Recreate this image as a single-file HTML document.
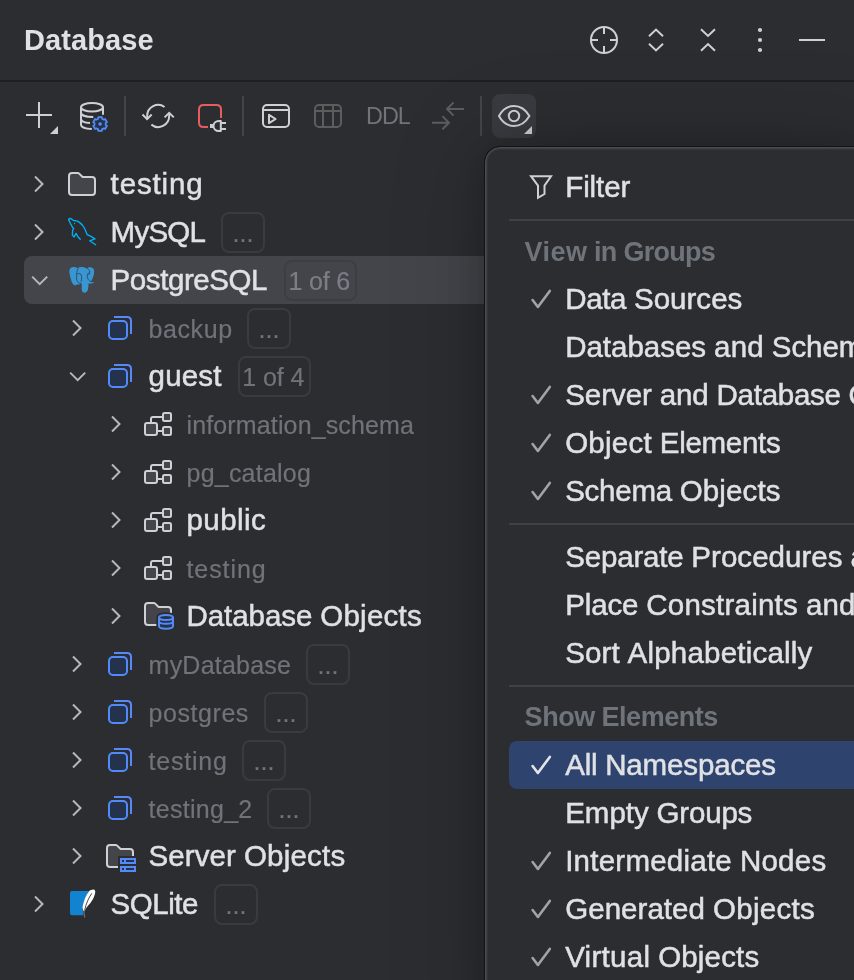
<!DOCTYPE html>
<html lang="en">
<head>
<meta charset="utf-8">
<title>Database</title>
<style>
html,body{margin:0;padding:0;}
body{width:854px;height:980px;overflow:hidden;background:#2b2d30;position:relative;
  font-family:"Liberation Sans",sans-serif;color:#dfe1e5;font-size:29px;}
.abs{position:absolute;}
#title{left:24px;top:0;height:80px;line-height:80px;font-weight:bold;font-size:29px;color:#dfe1e5;white-space:nowrap;}
#hline{left:0;top:80px;width:854px;height:2px;background:#1e1f22;}
.row{position:absolute;left:0;height:48px;width:486px;white-space:nowrap;}
.row .t{position:absolute;top:0;height:48px;line-height:48px;font-size:29.5px;}
.row .t.dim{font-size:25px;color:#6f737a;top:1px;}
.row .hint{position:absolute;top:4px;height:41px;box-sizing:border-box;border:2px solid #393b40;border-radius:8px;
  color:#6f737a;line-height:38px;font-size:25px;text-align:center;white-space:nowrap;}
.row .hint.onsel{border-color:#3c3e43;color:#7a7e85;}
#sel{left:24px;top:256px;width:470px;height:48px;border-radius:8px;background:#43454a;}
#popup{left:485px;top:147px;width:400px;height:900px;border-radius:15px;background:#2b2d30;border:1px solid #4a4c51;box-sizing:border-box;box-shadow:0 0 0 1px #121315,inset 0 0 0 1px #3d3f44,inset 0 0 0 2px #323437;}
#popshadow{left:485px;top:147px;width:400px;height:900px;border-radius:15px;box-shadow:0 4px 36px rgba(0,0,0,.22),0 0 100px rgba(0,0,0,.2);}
.mi{position:absolute;left:564px;height:48px;line-height:48px;font-size:29.5px;white-space:nowrap;color:#dfe1e5;}
.mh{position:absolute;left:524px;height:48px;line-height:48px;font-size:27px;font-weight:bold;white-space:nowrap;color:#6f737a;}
.sep{position:absolute;left:509px;width:345px;height:2px;background:#3f4146;}
#msel{left:509px;top:741px;width:345px;height:48px;border-radius:8px 0 0 8px;background:#2e436e;}
#root{position:absolute;left:0;top:0;width:854px;height:980px;overflow:hidden;will-change:transform;}
.row .t,.mi{-webkit-text-stroke:0.5px currentColor;}
.row .t.dim,.row .hint{-webkit-text-stroke:0.2px currentColor;}

</style>
</head>
<body>
<div id="root">
<div id="title" class="abs" style="letter-spacing:0.088px">Database</div>
<div id="hline" class="abs"></div>
<svg id="tb" class="abs" style="left:0;top:0" width="854" height="148" viewBox="0 0 854 148">
<g fill="none" stroke="#ced0d6" stroke-width="2">
<!-- header icons -->
<circle cx="604" cy="40" r="13"/><path d="M604 27 V34 M604 46 V53 M591 40 H598 M610 40 H617"/>
<path d="M649 36.3 L656 29.6 L663 36.3 M649 43.7 L656 50.4 L663 43.7"/>
<path d="M701 29.2 L708 35.9 L715 29.2 M701 50.8 L708 44.1 L715 50.8"/>
<path d="M799 40 H825"/>
<!-- plus -->
<path d="M26 115 H52 M39 102 V128"/>
<!-- db with gear -->
<ellipse cx="92" cy="107.25" rx="11" ry="4.25"/>
<path d="M81 107.25 V124.8 M103 107.25 V114.8 M81 112.8 C81 115 85.5 117 93.3 117 M81 118.8 C81 121 84.5 122.8 90 123 M81 124.8 C81 127 85 128.8 91.8 129"/>
<!-- refresh -->
<path d="M147.2 119 V116 A11 11 0 0 1 164.56 107.02 M169.2 113 V116 A11 11 0 0 1 151.37 124.62"/>
<path d="M142.5 114.5 L147.1 119.1 L151.7 114.5 M164.6 117.4 L169.2 112.8 L173.8 117.4"/>
<!-- console -->
<rect x="263" y="105" width="26" height="22" rx="4"/><path d="M263 110 H289"/>
<path d="M269 114.8 V123.2 L275.6 119 Z" stroke-linejoin="round"/>
</g>
<g fill="#ced0d6">
<circle cx="760" cy="30" r="2.1"/><circle cx="760" cy="40" r="2.1"/><circle cx="760" cy="50" r="2.1"/>
<path d="M58 126 V134 H50 Z"/>
<path d="M532 126 V134 H524 Z"/>
</g>
<!-- gear -->
<g>
<path d="M101.96 118.61 L101.94 117.14 L98.26 117.14 L98.24 118.61 L96.36 119.70 L95.08 118.98 L93.24 122.16 L94.50 122.91 L94.50 125.09 L93.24 125.84 L95.08 129.02 L96.36 128.30 L98.24 129.39 L98.26 130.86 L101.94 130.86 L101.96 129.39 L103.84 128.30 L105.12 129.02 L106.96 125.84 L105.70 125.09 L105.70 122.91 L106.96 122.16 L105.12 118.98 L103.84 119.70 Z" fill="#25324d" stroke="#548af7" stroke-width="1.8" stroke-linejoin="round"/>
<circle cx="100.1" cy="124" r="1.8" fill="#548af7"/>
</g>
<!-- disconnect -->
<path d="M208 127 H203.5 Q199 127 199 122.5 V109.5 Q199 105 203.5 105 H216.5 Q221 105 221 109.5 V118" fill="none" stroke="#e55e5e" stroke-width="2"/>
<path d="M210 124 H213.5 V128 H210 Z M221 122 H226 V124 H221 Z M221 128 H226 V130 H221 Z" fill="#ced0d6"/>
<path d="M220.8 121 H219 C215.5 121 213.5 123.5 213.5 126 C213.5 128.5 215.5 131 219 131 H220.8 Z" fill="#2b2d30" stroke="#ced0d6" stroke-width="2" stroke-linejoin="round"/>
<!-- separators -->
<g fill="#43454a"><rect x="124" y="96" width="2" height="40"/><rect x="242" y="96" width="2" height="40"/><rect x="480" y="96" width="2" height="40"/></g>
<!-- table (disabled) -->
<g fill="none" stroke="#5d5d5e" stroke-width="2">
<rect x="315" y="105" width="26" height="22" rx="4"/><path d="M315 111 H341 M323 105 V127 M333 105 V127"/>
<path d="M447 109 H464 M453.6 102.4 L447 109 L453.6 115.6 M432 122.7 H449 M442.4 116.1 L449 122.7 L442.4 129.3"/>
</g>
<!-- eye button -->
<rect x="492" y="94" width="44" height="44" rx="8" fill="#393b40"/>
<g fill="none" stroke="#ced0d6" stroke-width="2">
<path d="M499 116 C503 108.5 508.5 106 514 106 C519.5 106 525 108.5 529.4 116 C525 123.5 519.5 126 514 126 C508.5 126 503 123.5 499 116 Z"/>
<circle cx="514" cy="116" r="5.2"/>
</g>
<path d="M532 126 V134 H524 Z" fill="#ced0d6"/>
<text x="366" y="123.8" font-family="Liberation Sans, sans-serif" font-size="23.4" fill="#6f737a" letter-spacing="-1">DDL</text>
</svg>

<div id="sel" class="abs"></div>
<div class="row" style="top:160px"><svg class="abs" style="left:27px;top:12px" width="24" height="24" viewBox="0 0 24 24"><path d="M8 4.5 L15.5 12 L8 19.5" fill="none" stroke="#b4b8bf" stroke-width="2"/></svg><svg class="abs" style="left:66px;top:8px" width="32" height="32" viewBox="0 0 32 32"><path d="M3 8 Q3 5 6 5 H11.8 Q12.6 5 13.2 5.6 L16.6 9 H26 Q29 9 29 12 V24 Q29 27 26 27 H6 Q3 27 3 24 Z" fill="#43454a" stroke="#ced0d6" stroke-width="2" stroke-linejoin="round"/></svg><span class="t" style="left:110.6px;word-spacing:0.142px"><span style="letter-spacing:0.845px">testing</span></span></div>
<div class="row" style="top:208px"><svg class="abs" style="left:27px;top:12px" width="24" height="24" viewBox="0 0 24 24"><path d="M8 4.5 L15.5 12 L8 19.5" fill="none" stroke="#b4b8bf" stroke-width="2"/></svg><svg class="abs" style="left:66px;top:8px" width="32" height="32" viewBox="0 0 32 32"><path d="M2.9 3 Q3.5 2.3 4.9 2.6 L7.27 4.32 C8.5 4.7 9.5 4.7 10.65 4.96 C12 5.4 13 6.1 14.02 6.85 C15.2 7.8 16.2 8.8 16.97 9.8 C17.9 11 18.6 12.3 19.08 13.6 L21.19 18.66 L24.98 20.34 L28.99 22.87 L23.72 24.77 L29.62 28.78 M2.9 3 Q2.5 3.4 2.7 3.9 L4.32 7.27 L6.43 11.07 L7.7 12.76 C7 13.5 6.7 14.2 6.64 14.86 C6.4 16.2 6.3 17.8 6.43 19.08 L8.12 20.98 L10.02 17.39 L11.91 20.77 L14.23 23.3" fill="none" stroke="#00b2f5" stroke-width="1.35" stroke-linejoin="round" stroke-linecap="round"/><circle cx="8.54" cy="7.49" r="0.7" fill="#00a2e0"/></svg><span class="t" style="left:110.6px;word-spacing:-0.672px"><span style="letter-spacing:-0.757px">MySQL</span></span><span class="hint" style="left:221px;width:44px"><span style="letter-spacing:-0.026px">...</span></span></div>
<div class="row" style="top:256px"><svg class="abs" style="left:27px;top:12px" width="24" height="24" viewBox="0 0 24 24"><path d="M5.2 8.6 L12.7 16.1 L20.2 8.6" fill="none" stroke="#b4b8bf" stroke-width="2"/></svg><svg class="abs" style="left:66px;top:8px" width="32" height="32" viewBox="0 0 32 32"><path d="M3.4 6.5 C3.6 3.6 6.5 2.6 9.4 3.2 C10.4 3.4 11 3.8 11.6 4.2 C13 3 15.5 2.8 17.6 3.2 C19 3.4 20 3.8 20.8 4.4 C22.4 3 25.4 2.8 27 4.2 C28.6 5.6 28.4 8.6 27.6 11.4 C27 13.6 25.8 16.2 24.6 18 C25.8 18.4 27.2 18.2 28.2 17.8 C27.8 19 26 19.8 24.2 19.6 C23.4 19.6 22.8 19.4 22.6 19.2 C22.4 21.4 22.4 23.4 22 25.2 C21.6 27.4 20 28.8 18.4 28.8 C16.8 28.8 16 27.6 15.8 26 C15.6 24 15.8 21.4 15.6 19.4 C14.4 20.4 12.4 20.8 11.2 20.2 C10.4 21 9 21.6 8 21 C6.4 20 5.2 16.6 4.4 13.4 C3.8 11 3.2 8.6 3.4 6.5 Z" fill="#3a96d1"/><path d="M12.3 4.3 C10.8 6.5 10.4 10 10.6 14.9 C10.8 16.6 11.4 17.8 12.2 18.4 C13.2 19.2 14.4 19.5 15.4 19.6 M11 10.4 C11.8 9.4 13.6 9.2 14.8 10.2 C15.6 11 15.6 13 15.5 15.6 C15.4 16.6 15.2 17.4 14.8 17.9 M20.3 3.4 C22 4.6 23.4 6.2 24.1 8.1 C23 8.8 22 9.4 21.6 10.2 C21.2 11.4 21.2 12.6 21.4 13.6 C21.8 15 22.6 16 23.4 16.6 C24 17.2 24.6 17.6 25 17.8 M21.6 10.2 C22.4 9.8 23.4 9.7 24.2 10" fill="none" stroke="#2b4a63" stroke-width="0.9"/></svg><span class="t" style="left:110.6px;word-spacing:-0.365px"><span style="letter-spacing:-0.425px">PostgreSQL</span></span><span class="hint onsel" style="left:284px;width:73px;padding-right:2.4px"><span style="letter-spacing:-0.19px">1 of 6</span></span></div>
<div class="row" style="top:304px"><svg class="abs" style="left:65.4px;top:12px" width="24" height="24" viewBox="0 0 24 24"><path d="M8 4.5 L15.5 12 L8 19.5" fill="none" stroke="#b4b8bf" stroke-width="2"/></svg><svg class="abs" style="left:104px;top:8px" width="32" height="32" viewBox="0 0 32 32"><path d="M10 5 H23 Q27 5 27 9 V22" fill="none" stroke="#548af7" stroke-width="2"/><rect x="5" y="9" width="18" height="18" rx="4" fill="#25324d" stroke="#548af7" stroke-width="2"/></svg><span class="t dim" style="left:148.6px;word-spacing:-0.235px"><span style="letter-spacing:0.564px">backup</span></span><span class="hint" style="left:247px;width:44px"><span style="letter-spacing:-0.026px">...</span></span></div>
<div class="row" style="top:352px"><svg class="abs" style="left:65.4px;top:12px" width="24" height="24" viewBox="0 0 24 24"><path d="M5.2 8.6 L12.7 16.1 L20.2 8.6" fill="none" stroke="#b4b8bf" stroke-width="2"/></svg><svg class="abs" style="left:104px;top:8px" width="32" height="32" viewBox="0 0 32 32"><path d="M10 5 H23 Q27 5 27 9 V22" fill="none" stroke="#548af7" stroke-width="2"/><rect x="5" y="9" width="18" height="18" rx="4" fill="#25324d" stroke="#548af7" stroke-width="2"/></svg><span class="t" style="left:148.6px;word-spacing:-0.512px"><span style="letter-spacing:0.166px">guest</span></span><span class="hint" style="left:238px;width:73px;padding-right:2.4px"><span style="letter-spacing:-0.089px">1 of 4</span></span></div>
<div class="row" style="top:400px"><svg class="abs" style="left:103.6px;top:12px" width="24" height="24" viewBox="0 0 24 24"><path d="M8 4.5 L15.5 12 L8 19.5" fill="none" stroke="#b4b8bf" stroke-width="2"/></svg><svg class="abs" style="left:142px;top:8px" width="32" height="32" viewBox="0 0 32 32"><path d="M9 15 V11 Q9 9 11 9 H21 M16 23 H21" fill="none" stroke="#ced0d6" stroke-width="2"/><rect x="3" y="15" width="12" height="12" rx="2" fill="#43454a" stroke="#ced0d6" stroke-width="2"/><rect x="21" y="5" width="8" height="8" rx="1.5" fill="#43454a" stroke="#ced0d6" stroke-width="2"/><rect x="21" y="19" width="8" height="8" rx="1.5" fill="#43454a" stroke="#ced0d6" stroke-width="2"/></svg><span class="t dim" style="left:186.5px;word-spacing:-0.27px"><span style="letter-spacing:0.137px">information_schema</span></span></div>
<div class="row" style="top:448px"><svg class="abs" style="left:103.6px;top:12px" width="24" height="24" viewBox="0 0 24 24"><path d="M8 4.5 L15.5 12 L8 19.5" fill="none" stroke="#b4b8bf" stroke-width="2"/></svg><svg class="abs" style="left:142px;top:8px" width="32" height="32" viewBox="0 0 32 32"><path d="M9 15 V11 Q9 9 11 9 H21 M16 23 H21" fill="none" stroke="#ced0d6" stroke-width="2"/><rect x="3" y="15" width="12" height="12" rx="2" fill="#43454a" stroke="#ced0d6" stroke-width="2"/><rect x="21" y="5" width="8" height="8" rx="1.5" fill="#43454a" stroke="#ced0d6" stroke-width="2"/><rect x="21" y="19" width="8" height="8" rx="1.5" fill="#43454a" stroke="#ced0d6" stroke-width="2"/></svg><span class="t dim" style="left:186.5px;word-spacing:-0.169px"><span style="letter-spacing:0.222px">pg_catalog</span></span></div>
<div class="row" style="top:496px"><svg class="abs" style="left:103.6px;top:12px" width="24" height="24" viewBox="0 0 24 24"><path d="M8 4.5 L15.5 12 L8 19.5" fill="none" stroke="#b4b8bf" stroke-width="2"/></svg><svg class="abs" style="left:142px;top:8px" width="32" height="32" viewBox="0 0 32 32"><path d="M9 15 V11 Q9 9 11 9 H21 M16 23 H21" fill="none" stroke="#ced0d6" stroke-width="2"/><rect x="3" y="15" width="12" height="12" rx="2" fill="#43454a" stroke="#ced0d6" stroke-width="2"/><rect x="21" y="5" width="8" height="8" rx="1.5" fill="#43454a" stroke="#ced0d6" stroke-width="2"/><rect x="21" y="19" width="8" height="8" rx="1.5" fill="#43454a" stroke="#ced0d6" stroke-width="2"/></svg><span class="t" style="left:186.5px;word-spacing:-0.408px"><span style="letter-spacing:0.459px">public</span></span></div>
<div class="row" style="top:544px"><svg class="abs" style="left:103.6px;top:12px" width="24" height="24" viewBox="0 0 24 24"><path d="M8 4.5 L15.5 12 L8 19.5" fill="none" stroke="#b4b8bf" stroke-width="2"/></svg><svg class="abs" style="left:142px;top:8px" width="32" height="32" viewBox="0 0 32 32"><path d="M9 15 V11 Q9 9 11 9 H21 M16 23 H21" fill="none" stroke="#ced0d6" stroke-width="2"/><rect x="3" y="15" width="12" height="12" rx="2" fill="#43454a" stroke="#ced0d6" stroke-width="2"/><rect x="21" y="5" width="8" height="8" rx="1.5" fill="#43454a" stroke="#ced0d6" stroke-width="2"/><rect x="21" y="19" width="8" height="8" rx="1.5" fill="#43454a" stroke="#ced0d6" stroke-width="2"/></svg><span class="t dim" style="left:186.5px;word-spacing:0.251px"><span style="letter-spacing:0.912px">testing</span></span></div>
<div class="row" style="top:592px"><svg class="abs" style="left:103.6px;top:12px" width="24" height="24" viewBox="0 0 24 24"><path d="M8 4.5 L15.5 12 L8 19.5" fill="none" stroke="#b4b8bf" stroke-width="2"/></svg><svg class="abs" style="left:142px;top:8px" width="32" height="32" viewBox="0 0 32 32"><path d="M3 6 Q3 3 6 3 H11.8 Q12.6 3 13.2 3.6 L16.6 7 H26 Q29 7 29 10 V22 Q29 25 26 25 H6 Q3 25 3 22 Z" fill="#43454a" stroke="#ced0d6" stroke-width="2"/><path d="M17 17.5 C17 14 31 14 31 17.5 V26 C31 29.5 17 29.5 17 26 Z" fill="#2b2d30" stroke="#2b2d30" stroke-width="5.4"/><path d="M17 17.5 V26 C17 29.5 31 29.5 31 26 V17.5" fill="#25324d" stroke="#548af7" stroke-width="2"/><ellipse cx="24" cy="17.5" rx="7" ry="2.6" fill="#25324d" stroke="#548af7" stroke-width="2"/><path d="M17 21.2 C17 24.6 31 24.6 31 21.2" fill="none" stroke="#548af7" stroke-width="2"/></svg><span class="t" style="left:186.5px;word-spacing:-0.238px"><span style="letter-spacing:-0.065px">Database</span> <span style="letter-spacing:0.262px">Objects</span></span></div>
<div class="row" style="top:640px"><svg class="abs" style="left:65.4px;top:12px" width="24" height="24" viewBox="0 0 24 24"><path d="M8 4.5 L15.5 12 L8 19.5" fill="none" stroke="#b4b8bf" stroke-width="2"/></svg><svg class="abs" style="left:104px;top:8px" width="32" height="32" viewBox="0 0 32 32"><path d="M10 5 H23 Q27 5 27 9 V22" fill="none" stroke="#548af7" stroke-width="2"/><rect x="5" y="9" width="18" height="18" rx="4" fill="#25324d" stroke="#548af7" stroke-width="2"/></svg><span class="t dim" style="left:148.6px;word-spacing:-0.114px"><span style="letter-spacing:0.22px">myDatabase</span></span><span class="hint" style="left:306px;width:44px"><span style="letter-spacing:-0.026px">...</span></span></div>
<div class="row" style="top:688px"><svg class="abs" style="left:65.4px;top:12px" width="24" height="24" viewBox="0 0 24 24"><path d="M8 4.5 L15.5 12 L8 19.5" fill="none" stroke="#b4b8bf" stroke-width="2"/></svg><svg class="abs" style="left:104px;top:8px" width="32" height="32" viewBox="0 0 32 32"><path d="M10 5 H23 Q27 5 27 9 V22" fill="none" stroke="#548af7" stroke-width="2"/><rect x="5" y="9" width="18" height="18" rx="4" fill="#25324d" stroke="#548af7" stroke-width="2"/></svg><span class="t dim" style="left:148.6px;word-spacing:-0.089px"><span style="letter-spacing:0.555px">postgres</span></span><span class="hint" style="left:264px;width:44px"><span style="letter-spacing:-0.026px">...</span></span></div>
<div class="row" style="top:736px"><svg class="abs" style="left:65.4px;top:12px" width="24" height="24" viewBox="0 0 24 24"><path d="M8 4.5 L15.5 12 L8 19.5" fill="none" stroke="#b4b8bf" stroke-width="2"/></svg><svg class="abs" style="left:104px;top:8px" width="32" height="32" viewBox="0 0 32 32"><path d="M10 5 H23 Q27 5 27 9 V22" fill="none" stroke="#548af7" stroke-width="2"/><rect x="5" y="9" width="18" height="18" rx="4" fill="#25324d" stroke="#548af7" stroke-width="2"/></svg><span class="t dim" style="left:148.6px;word-spacing:0.117px"><span style="letter-spacing:0.778px">testing</span></span><span class="hint" style="left:242px;width:44px"><span style="letter-spacing:-0.026px">...</span></span></div>
<div class="row" style="top:784px"><svg class="abs" style="left:65.4px;top:12px" width="24" height="24" viewBox="0 0 24 24"><path d="M8 4.5 L15.5 12 L8 19.5" fill="none" stroke="#b4b8bf" stroke-width="2"/></svg><svg class="abs" style="left:104px;top:8px" width="32" height="32" viewBox="0 0 32 32"><path d="M10 5 H23 Q27 5 27 9 V22" fill="none" stroke="#548af7" stroke-width="2"/><rect x="5" y="9" width="18" height="18" rx="4" fill="#25324d" stroke="#548af7" stroke-width="2"/></svg><span class="t dim" style="left:148.6px;word-spacing:-0.043px"><span style="letter-spacing:0.271px">testing_2</span></span><span class="hint" style="left:267px;width:44px"><span style="letter-spacing:-0.026px">...</span></span></div>
<div class="row" style="top:832px"><svg class="abs" style="left:65.4px;top:12px" width="24" height="24" viewBox="0 0 24 24"><path d="M8 4.5 L15.5 12 L8 19.5" fill="none" stroke="#b4b8bf" stroke-width="2"/></svg><svg class="abs" style="left:104px;top:8px" width="32" height="32" viewBox="0 0 32 32"><path d="M3 8 Q3 5 6 5 H11.8 Q12.6 5 13.2 5.6 L16.6 9 H26 Q29 9 29 12 V24 Q29 27 26 27 H6 Q3 27 3 24 Z" fill="#43454a" stroke="#ced0d6" stroke-width="2"/><rect x="16" y="18" width="16" height="14" fill="#2b2d30" stroke="#2b2d30" stroke-width="4"/><path d="M16 18 H32 V24 H16 Z M16 26 H32 V32 H16 Z" fill="#548af7"/><path d="M18 20 H20 V22 H18 Z M22 20 H30 V22 H22 Z M18 28 H20 V30 H18 Z M22 28 H30 V30 H22 Z" fill="#25324d"/></svg><span class="t" style="left:148.6px;word-spacing:-0.299px"><span style="letter-spacing:0.089px">Server</span> <span style="letter-spacing:0.201px">Objects</span></span></div>
<div class="row" style="top:880px"><svg class="abs" style="left:27px;top:12px" width="24" height="24" viewBox="0 0 24 24"><path d="M8 4.5 L15.5 12 L8 19.5" fill="none" stroke="#b4b8bf" stroke-width="2"/></svg><svg class="abs" style="left:66px;top:8px" width="32" height="32" viewBox="0 0 32 32"><path d="M6 3 H23.3 C20.5 7 17.5 13 16.5 18.8 L17.3 27.2 H6 Q4 27.2 4 25.2 V5 Q4 3 6 3 Z" fill="#1283d0"/><path d="M17.9 22.6 C18 25.4 18.3 27.6 18.8 29.6" fill="none" stroke="#85888d" stroke-width="0.9"/><path d="M27.1 1.5 C28.6 1.2 29.6 2.6 29.2 4.6 C28.8 7 28.2 8.6 27.5 9.9 C26.4 12.2 24.9 14.4 23.3 16.2 C21.9 17.9 20 19.6 18.9 22.6 L17.6 23 C16.9 21.4 16.4 20.2 16.5 18.8 C17 15.8 17.9 12.8 19.1 9.9 C20.2 7.4 21.6 5 23.3 2.96 C24.4 2 25.8 1.6 27.1 1.5 Z" fill="#ffffff"/><path d="M25.8 5.3 C24.2 7.6 22.8 10.2 21.6 12.9 C20.4 15.6 19.4 18.8 18.6 22.3" fill="none" stroke="#34363a" stroke-width="0.9"/></svg><span class="t" style="left:110.6px;word-spacing:-0.312px"><span style="letter-spacing:-0.497px">SQLite</span></span><span class="hint" style="left:214px;width:44px"><span style="letter-spacing:-0.026px">...</span></span></div>
<div id="popshadow" class="abs"></div>
<div id="popup" class="abs"></div>
<div id="msel" class="abs"></div>
<svg class="abs" style="left:524px;top:172px" width="32" height="32" viewBox="0 0 32 32"><path d="M7 4.2 H27 L20.5 13.6 V22 L14 25.8 V13.6 Z" fill="none" stroke="#ced0d6" stroke-width="2" stroke-linejoin="miter"/></svg>
<div class="mi" style="left:565.2px;top:163px;word-spacing:-0.504px"><span style="letter-spacing:-0.075px">Filter</span></div>
<div class="sep" style="top:219px"></div>
<div class="mh" style="left:524.6px;top:227.5px;word-spacing:-0.903px"><span style="letter-spacing:0.425px">View</span> <span style="letter-spacing:-0.591px">in</span> <span style="letter-spacing:-0.708px">Groups</span></div>
<svg class="abs" style="left:526px;top:284px" width="28" height="28" viewBox="0 0 28 28"><path d="M6.6 16 L11.9 23 L23.8 6.9" fill="none" stroke="#a1a3a7" stroke-width="2.6" stroke-linecap="round" stroke-linejoin="round"/></svg>
<div class="mi" style="left:565.2px;top:275px;word-spacing:-0.328px"><span style="letter-spacing:-0.363px">Data</span> <span style="letter-spacing:0.025px">Sources</span></div>
<div class="mi" style="left:565.2px;top:323px;word-spacing:-0.21px"><span style="letter-spacing:-0.017px">Databases</span> <span style="letter-spacing:0.16px">and</span> <span style="letter-spacing:-0.053px">Schemas</span></div>
<svg class="abs" style="left:526px;top:380px" width="28" height="28" viewBox="0 0 28 28"><path d="M6.6 16 L11.9 23 L23.8 6.9" fill="none" stroke="#a1a3a7" stroke-width="2.6" stroke-linecap="round" stroke-linejoin="round"/></svg>
<div class="mi" style="left:565.2px;top:371px;word-spacing:-0.424px"><span style="letter-spacing:-0.036px">Server</span> <span style="letter-spacing:-0.055px">and</span> <span style="letter-spacing:-0.251px">Database</span> <span style="letter-spacing:0.075px">Objects</span></div>
<svg class="abs" style="left:526px;top:428px" width="28" height="28" viewBox="0 0 28 28"><path d="M6.6 16 L11.9 23 L23.8 6.9" fill="none" stroke="#a1a3a7" stroke-width="2.6" stroke-linecap="round" stroke-linejoin="round"/></svg>
<div class="mi" style="left:565.2px;top:419px;word-spacing:-0.337px"><span style="letter-spacing:0.234px">Object</span> <span style="letter-spacing:-0.27px">Elements</span></div>
<svg class="abs" style="left:526px;top:476px" width="28" height="28" viewBox="0 0 28 28"><path d="M6.6 16 L11.9 23 L23.8 6.9" fill="none" stroke="#a1a3a7" stroke-width="2.6" stroke-linecap="round" stroke-linejoin="round"/></svg>
<div class="mi" style="left:565.2px;top:467px;word-spacing:-0.374px"><span style="letter-spacing:-0.249px">Schema</span> <span style="letter-spacing:0.126px">Objects</span></div>
<div class="sep" style="top:523px"></div>
<div class="mi" style="left:565.2px;top:533px;word-spacing:-0.385px"><span style="letter-spacing:-0.174px">Separate</span> <span style="letter-spacing:0.041px">Procedures</span> <span style="letter-spacing:-0.015px">and</span> <span style="letter-spacing:0.023px">Functions</span></div>
<div class="mi" style="left:565.2px;top:581px;word-spacing:-0.241px"><span style="letter-spacing:-0.145px">Place</span> <span style="letter-spacing:0.234px">Constraints</span> <span style="letter-spacing:0.128px">and</span> <span style="letter-spacing:-0.079px">Similar</span> <span style="letter-spacing:0.259px">Objects</span> <span style="letter-spacing:0.28px">Under</span> <span style="letter-spacing:-0.117px">Schema</span></div>
<div class="mi" style="left:565.2px;top:629px;word-spacing:-0.409px"><span style="letter-spacing:0.102px">Sort</span> <span style="letter-spacing:0.212px">Alphabetically</span></div>
<div class="sep" style="top:685px"></div>
<div class="mh" style="left:524.6px;top:693px;word-spacing:-0.899px"><span style="letter-spacing:-0.423px">Show</span> <span style="letter-spacing:-0.471px">Elements</span></div>
<svg class="abs" style="left:526px;top:750px" width="28" height="28" viewBox="0 0 28 28"><path d="M6.6 16 L11.9 23 L23.8 6.9" fill="none" stroke="#e4e5e8" stroke-width="2.6" stroke-linecap="round" stroke-linejoin="round"/></svg>
<div class="mi" style="left:565.2px;top:741px;word-spacing:-0.508px"><span style="letter-spacing:-0.17px">All</span> <span style="letter-spacing:-0.143px">Namespaces</span></div>
<div class="mi" style="left:565.2px;top:789px;word-spacing:-0.4px"><span style="letter-spacing:-0.022px">Empty</span> <span style="letter-spacing:-0.171px">Groups</span></div>
<svg class="abs" style="left:526px;top:846px" width="28" height="28" viewBox="0 0 28 28"><path d="M6.6 16 L11.9 23 L23.8 6.9" fill="none" stroke="#a1a3a7" stroke-width="2.6" stroke-linecap="round" stroke-linejoin="round"/></svg>
<div class="mi" style="left:565.2px;top:837px;word-spacing:-0.247px"><span style="letter-spacing:0.232px">Intermediate</span> <span style="letter-spacing:0.237px">Nodes</span></div>
<svg class="abs" style="left:526px;top:894px" width="28" height="28" viewBox="0 0 28 28"><path d="M6.6 16 L11.9 23 L23.8 6.9" fill="none" stroke="#a1a3a7" stroke-width="2.6" stroke-linecap="round" stroke-linejoin="round"/></svg>
<div class="mi" style="left:565.2px;top:885px;word-spacing:-0.193px"><span style="letter-spacing:0.044px">Generated</span> <span style="letter-spacing:0.307px">Objects</span></div>
<svg class="abs" style="left:526px;top:942px" width="28" height="28" viewBox="0 0 28 28"><path d="M6.6 16 L11.9 23 L23.8 6.9" fill="none" stroke="#a1a3a7" stroke-width="2.6" stroke-linecap="round" stroke-linejoin="round"/></svg>
<div class="mi" style="left:565.2px;top:933px;word-spacing:-0.337px"><span style="letter-spacing:0.291px">Virtual</span> <span style="letter-spacing:0.164px">Objects</span></div>
</div>
</body>
</html>
